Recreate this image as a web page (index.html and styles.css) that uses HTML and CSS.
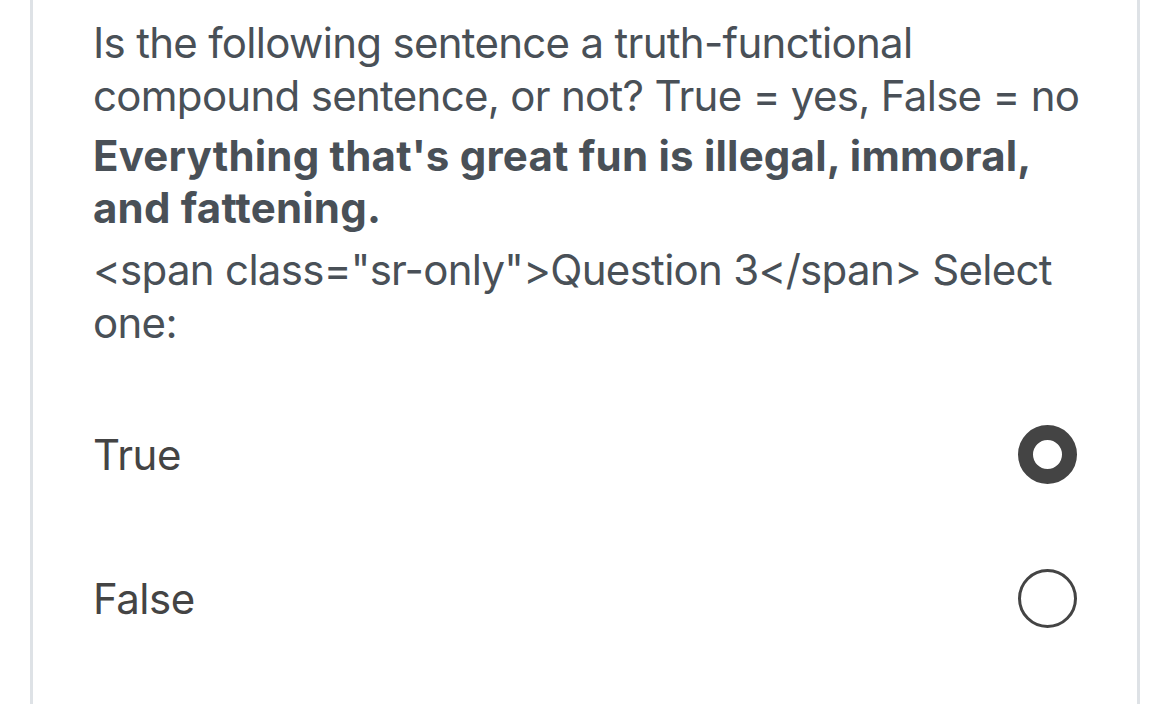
FILE: index.html
```html
<!DOCTYPE html>
<html lang="en">
<head>
    <meta charset="UTF-8">
    <meta name="viewport" content="width=device-width, initial-scale=1.0">
    <title>Question 3</title>
    <link rel="stylesheet" href="styles.css">
</head>
<body>

    <div class="question-card">
        <div class="question-text">
            <p class="prompt">Is the following sentence a truth-functional compound sentence, or not? True = yes, False = no</p>
            <p class="statement">Everything that's great fun is illegal, immoral, and fattening.</p>
            <p class="select-label">&lt;span class="sr-only"&gt;Question 3&lt;/span&gt; Select one:</p>
        </div>

        <div class="answers">
            <label class="answer-row">
                <span class="answer-text">True</span>
                <span class="radio checked"></span>
            </label>
            <label class="answer-row">
                <span class="answer-text">False</span>
                <span class="radio"></span>
            </label>
        </div>
    </div>

</body>
</html>
```

FILE: styles.css
```css
/* Page reset */
body {
    margin: 0;
    background-color: #fff;
    font-family: Inter, "Noto Sans", sans-serif;
}

/* Card with side borders only */
.question-card {
    margin: 0 30px;
    height: 704px;
    overflow: hidden;
    border-left: 3px solid #dee2e6;
    border-right: 3px solid #dee2e6;
    box-sizing: border-box;
    padding: 16px 40px 0 60px;
}

.question-text p {
    margin: 0;
    font-size: 42px;
    line-height: 53px;
    letter-spacing: -0.7px;
    color: #495057;
}

.question-text .statement {
    font-weight: 700;
    letter-spacing: 0.2px;
    margin-top: 8px;
    line-height: 52px;
}

.question-text .select-label {
    margin-top: 9px;
    line-height: 53px;
}

.answers {
    margin-top: 33px;
}

.answer-row {
    display: flex;
    align-items: center;
    justify-content: space-between;
    height: 144px;
    padding-right: 20px;
}

.answer-text {
    font-size: 42px;
    letter-spacing: -0.5px;
    color: #444;
}

/* Radio buttons drawn with borders */
.radio {
    width: 59px;
    height: 59px;
    border-radius: 50%;
    border: 3px solid #444;
    box-sizing: border-box;
}

.radio.checked {
    border-width: 15px;
}
```
